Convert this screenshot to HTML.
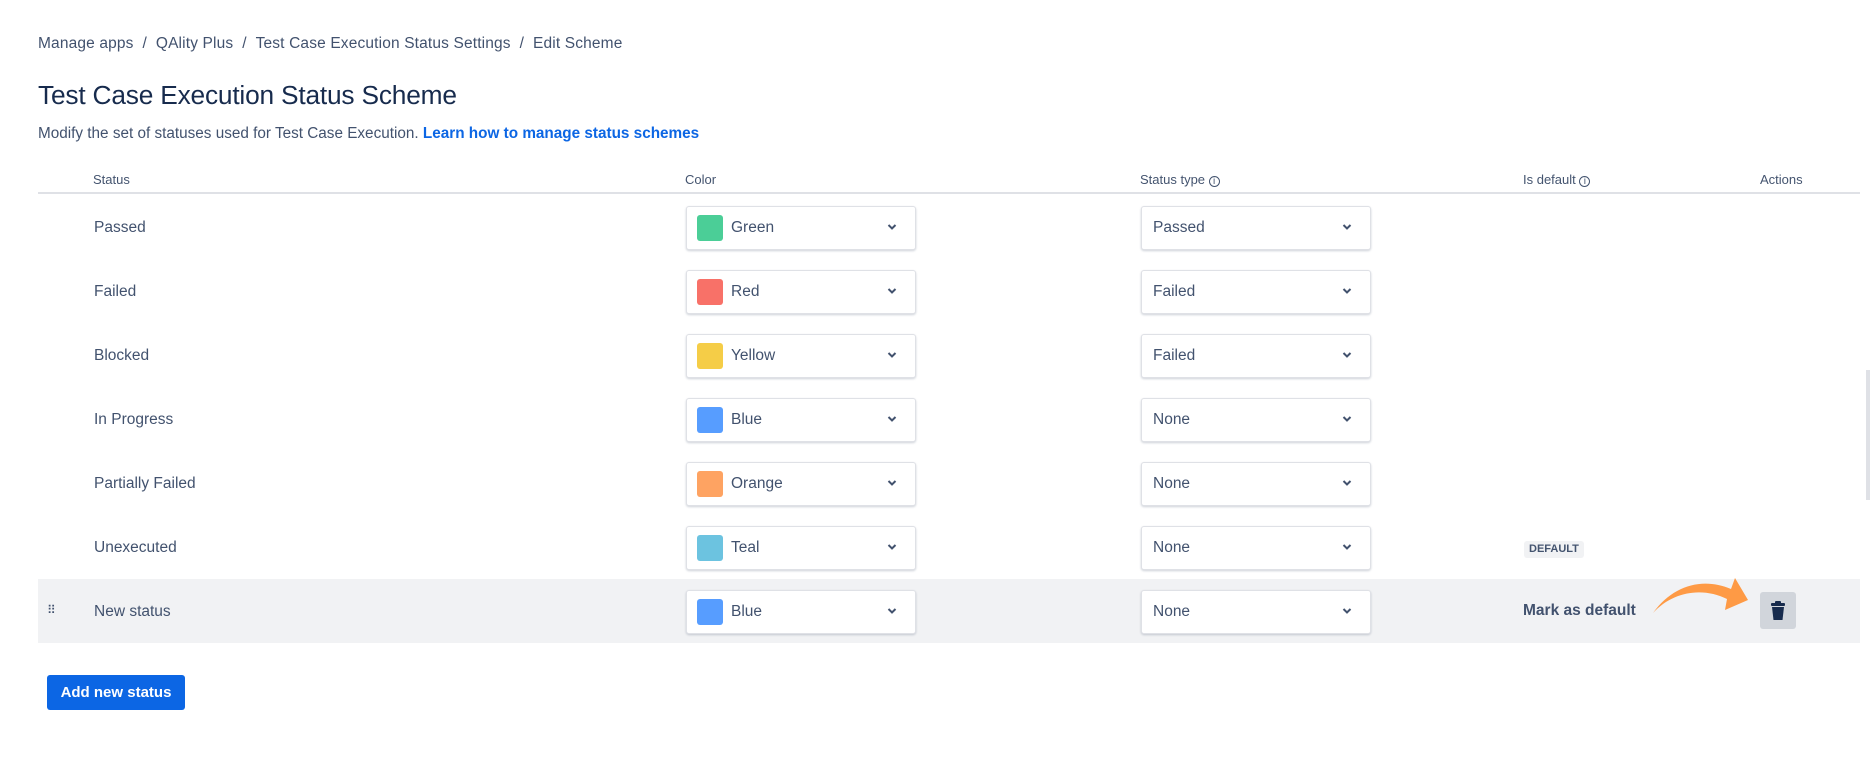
<!DOCTYPE html>
<html><head><meta charset="utf-8"><style>
body{margin:0;width:1870px;height:780px;background:#fff;font-family:"Liberation Sans",sans-serif;color:#172b4d;position:relative;overflow:hidden}
.a{position:absolute}
.bc{left:38px;top:35px;font-size:15.5px;color:#42526e;letter-spacing:0.15px}
h1{position:absolute;left:38px;top:80px;margin:0;font-size:26.3px;font-weight:normal;color:#172b4d;letter-spacing:-0.2px}
.sub{left:38px;top:125px;font-size:15.3px;color:#42526e}
.sub b{color:#0c66e4}
.th{top:172px;font-size:13px;color:#44546f}
.line{left:38px;top:192px;width:1822px;height:2px;background:#dfe1e6}
.row{left:38px;width:1822px;height:64px}
.lbl{font-size:15.5px;color:#42526e}
.sel{width:230px;height:44px;border:1px solid #dfe1e6;border-radius:3px;background:#fff;box-shadow:0 1px 2px rgba(9,30,66,.2);box-sizing:border-box}
.sel span{position:absolute;top:12px;font-size:15.5px;color:#42526e}
.sw{position:absolute;left:10px;top:8px;width:26px;height:26px;border-radius:3px}
.chev{position:absolute;right:18px;top:16px}
</style></head><body>
<div class="a bc">Manage apps &nbsp;/ &nbsp;QAlity Plus &nbsp;/ &nbsp;Test Case Execution Status Settings &nbsp;/ &nbsp;Edit Scheme</div>
<h1>Test Case Execution Status Scheme</h1>
<div class="a sub">Modify the set of statuses used for Test Case Execution. <b>Learn how to manage status schemes</b></div>
<div class="a th" style="left:93px">Status</div>
<div class="a th" style="left:685px">Color</div>
<div class="a th" style="left:1140px">Status type <span style="font-size:10px;border:1px solid #44546f;border-radius:50%;display:inline-block;width:9px;height:9px;line-height:9px;text-align:center">i</span></div>
<div class="a th" style="left:1523px">Is default <span style="font-size:10px;border:1px solid #44546f;border-radius:50%;display:inline-block;width:9px;height:9px;line-height:9px;text-align:center">i</span></div>
<div class="a th" style="left:1760px">Actions</div>
<div class="a line"></div>

<div class="a row" style="top:579px;background:#f1f2f4"></div>
<div class="a" style="left:47px;top:603px;font-size:12px;color:#42526e;letter-spacing:-1px">⠿</div>

<div id="rows"></div>
<script>
var d=[["Passed","Green","#4bce97","Passed"],["Failed","Red","#f87168","Failed"],["Blocked","Yellow","#f5cd47","Failed"],["In Progress","Blue","#579dff","None"],["Partially Failed","Orange","#fea362","None"],["Unexecuted","Teal","#6cc3e0","None"],["New status","Blue","#579dff","None"]];
var chev='<svg class="chev" width="10" height="8" viewBox="0 0 10 8"><path d="M1.5 2l3.5 3.5L8.5 2" stroke="#42526e" stroke-width="2" fill="none"/></svg>';
var h='';
d.forEach(function(r,i){var c=228+i*64;
h+='<div class="a lbl" style="left:94px;top:'+(c-9)+'px">'+r[0]+'</div>';
h+='<div class="a sel" style="left:686px;top:'+(c-22)+'px"><div class="sw" style="background:'+r[2]+'"></div><span style="left:44px">'+r[1]+'</span>'+chev+'</div>';
h+='<div class="a sel" style="left:1141px;top:'+(c-22)+'px"><span style="left:11px">'+r[3]+'</span>'+chev+'</div>';});
document.getElementById('rows').innerHTML=h;
</script>
<div class="a" style="left:1524px;top:541px;height:17px;padding:0 5px;background:#f1f2f4;border-radius:3px;font-size:11px;font-weight:bold;color:#44546f;line-height:17px">DEFAULT</div>
<div class="a" style="left:1523px;top:602px;font-size:15.5px;font-weight:bold;color:#42526e">Mark as default</div>
<svg class="a" style="left:1645px;top:575px" width="110" height="50" viewBox="0 0 110 50"><path d="M8 38 C28 16 58 12 82 24 L80 35 L103 25 L90 3 L86 14 C58 2 28 10 8 38Z" fill="#fe9a45"/></svg>
<div class="a" style="left:1760px;top:592px;width:36px;height:37px;background:#d1d5db;border-radius:3px"></div>
<svg class="a" style="left:1769px;top:601px" width="18" height="20" viewBox="0 0 18 20"><rect x="2" y="2" width="14" height="3" rx="1" fill="#172b4d"/><rect x="6" y="0" width="6" height="3" rx="1" fill="#172b4d"/><path d="M3 6h12l-1.5 13h-9z" fill="#172b4d"/></svg>
<div class="a" style="left:47px;top:675px;width:138px;height:35px;background:#0c66e4;border-radius:3px;color:#fff;font-weight:bold;font-size:15px;text-align:center;line-height:35px">Add new status</div>
<div class="a" style="left:1866px;top:370px;width:4px;height:130px;background:#dfe1e6"></div>
</body></html>
